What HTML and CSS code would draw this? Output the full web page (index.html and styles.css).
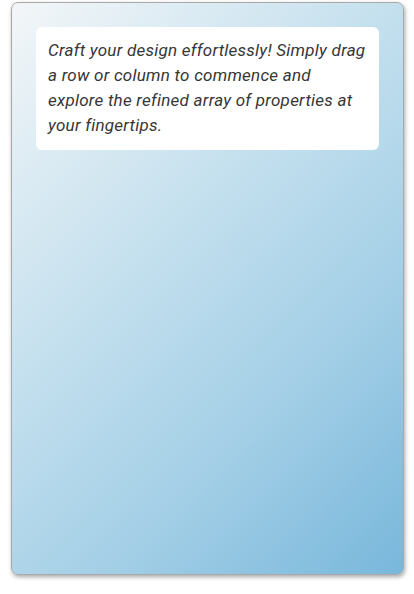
FILE: index.html
```html
<!DOCTYPE html>
<html>
<head>
<meta charset="utf-8">
<link rel="stylesheet" href="styles.css">
</head>
<body>
<div class="panel">
  <div class="card">
    <p class="hint">Craft your design effortlessly! Simply drag a row or column to commence and explore the refined array of properties at your fingertips.</p>
  </div>
</div>
</body>
</html>
```
FILE: styles.css
```css
html, body {
  margin: 0;
  padding: 0;
  background: #ffffff;
}
body {
  width: 414px;
  height: 594px;
  padding: 2px 10px 0 11px;
  box-sizing: border-box;
}
.panel {
  width: 393px;
  height: 573px;
  box-sizing: border-box;
  border-radius: 7px;
  border: 1px solid #a9a9a9;
  background: linear-gradient(135deg, #f3f6f8 0%, #c4e0ee 40%, #a2cee6 70%, #78b7db 100%);
  box-shadow: 1px 2px 4px rgba(0, 0, 0, 0.35);
  padding: 24px;
}
.card {
  background: #ffffff;
  border-radius: 6px;
  padding: 11px 12px 12px 12px;
}
.hint {
  margin: 0;
  font-family: Roboto, "Liberation Sans", sans-serif;
  font-style: italic;
  font-size: 17px;
  line-height: 25px;
  letter-spacing: 0.25px;
  color: #363636;
}
```
